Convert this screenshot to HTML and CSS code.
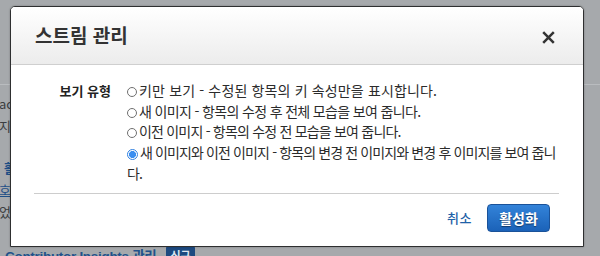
FILE: index.html
```html
<!DOCTYPE html>
<html lang="ko">
<head>
<meta charset="utf-8">
<link rel="stylesheet" href="styles.css">
</head>
<body>
<div class="page">
  <div class="page-rule"></div>
  <div class="page-line l1">ac</div>
  <div class="page-line l2">지</div>
  <div class="page-line l3 blue-bold">활</div>
  <div class="page-line l4 blue-link">호출</div>
  <div class="page-line l5">었음</div>
  <div class="page-foot">
    <span class="foot-title">Contributor Insights 관리</span>
    <span class="badge">신규</span>
  </div>
</div>

<div class="modal">
  <div class="modal-header">
    <h1 class="modal-title">스트림 관리</h1>
    <span class="close" aria-label="닫기">
      <svg width="13" height="13" viewBox="0 0 13 13"><path d="M1.2 1.2 L11.8 11.8 M11.8 1.2 L1.2 11.8" stroke="#333" stroke-width="2.5" stroke-linecap="butt"/></svg>
    </span>
  </div>
  <div class="modal-body">
    <div class="field">
      <div class="field-label">보기 유형</div>
      <div class="field-options">
        <div class="option opt-keys"><span class="radio"></span>키만 보기 - 수정된 항목의 키 속성만을 표시합니다.</div>
        <div class="option opt-new"><span class="radio"></span>새 이미지 - 항목의 수정 후 전체 모습을 보여 줍니다.</div>
        <div class="option opt-old"><span class="radio"></span>이전 이미지 - 항목의 수정 전 모습을 보여 줍니다.</div>
        <div class="option opt-both"><span class="radio checked"></span>새 이미지와 이전 이미지 - 항목의 변경 전 이미지와 변경 후 이미지를 보여 줍니다.</div>
      </div>
    </div>
    <div class="divider"></div>
    <div class="footer">
      <a class="cancel" href="#">취소</a>
      <button class="primary">활성화</button>
    </div>
  </div>
</div>
</body>
</html>
```

FILE: styles.css
```css
* { box-sizing: border-box; }
html, body { margin: 0; padding: 0; }
body {
  width: 600px;
  height: 256px;
  overflow: hidden;
  background: #a6a9ac;
  font-family: "Noto Sans CJK KR", "Noto Sans", sans-serif;
  font-feature-settings: "palt" 1;
  color: #222;
  position: relative;
}
.page {
  padding-top: 84px;
  font-size: 13px;
  color: #3b3d40;
}
.page-rule {
  height: 1px;
  background: #b9bcbf;
  margin-bottom: 8px;
}
.page-line {
  height: 22px;
  line-height: 22px;
  margin-left: -1px;
}
.l2 { margin-bottom: 20px; }
.blue-bold { color: #1f4f86; font-weight: 700; margin-left: 4px; }
.blue-link { color: #1f4f86; text-decoration: underline; }
.page-foot {
  position: absolute;
  left: 5px;
  top: 245px;
  white-space: nowrap;
  display: flex;
  align-items: center;
  gap: 10px;
}
.foot-title {
  font-family: "Liberation Sans", "Noto Sans CJK KR", sans-serif;
  font-weight: 700;
  font-size: 13.5px;
  letter-spacing: -0.3px;
  color: #21518a;
}
.badge {
  background: #1d4a80;
  color: #dfe6ee;
  font-size: 11px;
  font-weight: 700;
  padding: 1px 4px;
  border-radius: 2px;
}

.modal {
  position: absolute;
  left: 10px;
  top: 6px;
  width: 574px;
  height: 241px;
  background: #fff;
  border: 1px solid #2e2f30;
  border-radius: 5px 5px 0 0;
  overflow: hidden;
  box-shadow: 0 0 2px rgba(0,0,0,0.3);
}
.modal-header {
  height: 58px;
  background: linear-gradient(#ffffff, #ececec);
  border-bottom: 1px solid #cfcfcf;
  display: flex;
  align-items: center;
  justify-content: space-between;
  padding: 0 28px 0 24px;
}
.modal-title {
  margin: 0;
  font-size: 19px;
  font-weight: 700;
  color: #333;
  margin-top: -2px;
}
.close {
  display: flex;
  width: 13px;
  height: 13px;
  margin-top: 3px;
}
.modal-body {
  padding: 15px 24px 0 23px;
}
.field {
  display: flex;
  align-items: flex-start;
  line-height: 20.7px;
}
.field-label {
  width: 77px;
  text-align: right;
  font-weight: 700;
  font-size: 13px;
  color: #222;
  padding-top: 1px;
}
.field-options {
  margin-left: 13px;
  width: 435px;
  color: #2b2b2b;
  font-size: 14px;
}
.option {
  padding-left: 3px;
}
.opt-keys { letter-spacing: 0.15px; }
.opt-new { letter-spacing: -0.65px; }
.opt-old { letter-spacing: -0.8px; }
.opt-both { letter-spacing: -0.88px; }
.radio {
  display: inline-block;
  width: 10px;
  height: 10px;
  border: 1px solid #6f6f6f;
  border-radius: 50%;
  background: #fff;
  vertical-align: -1px;
  margin-right: 2px;
}
.radio.checked {
  width: 11px;
  height: 11px;
  border-color: #2f7fe0;
  background: radial-gradient(circle, #3a8ef0 0 3.2px, #fff 3.8px);
  vertical-align: -1.5px;
  margin-right: 2px;
}
.divider {
  height: 1px;
  background: #cdcdcd;
  margin-top: 9px;
  width: 525px;
}
.footer {
  display: flex;
  justify-content: flex-end;
  align-items: center;
  gap: 15px;
  padding-top: 10px;
  width: 516px;
}
.cancel {
  color: #1f62a8;
  text-decoration: none;
  font-size: 13px;
  font-weight: 500;
  letter-spacing: 0.5px;
}
.primary {
  width: 63px;
  height: 28px;
  border: 1px solid #1a5299;
  border-radius: 4px;
  background: linear-gradient(#3383d9, #1b62b8);
  color: #fff;
  font-family: "Noto Sans CJK KR", sans-serif;
  font-size: 14px;
  font-weight: 700;
  text-shadow: 0 1px 1px rgba(0,0,0,0.45);
  padding: 0;
}
```
